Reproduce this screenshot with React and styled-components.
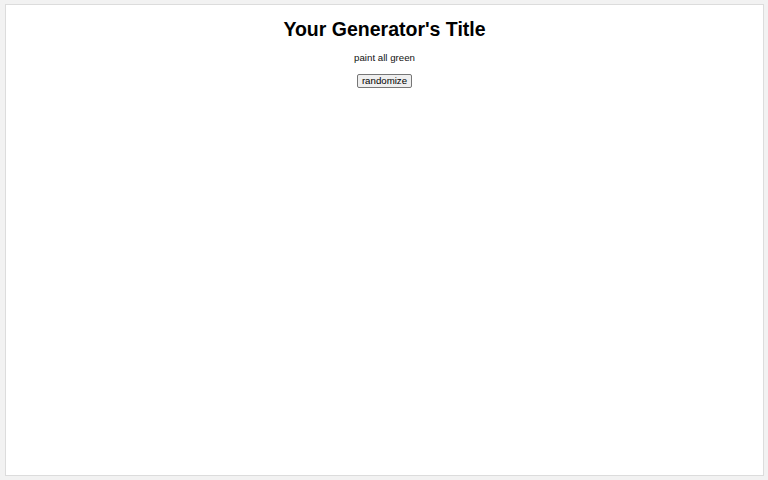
import React from "react";
import styled, { createGlobalStyle } from "styled-components";

const Global = createGlobalStyle`
  html, body {
    margin: 0;
    height: 100%;
    background: #f2f2f2;
    font-family: "Liberation Sans", Arial, sans-serif;
  }
  #root {
    height: 100%;
  }
`;

const Page = styled.div`
  height: 100%;
  box-sizing: border-box;
  padding: 4px 4px 4px 5px;
`;

const Panel = styled.div`
  height: 100%;
  box-sizing: border-box;
  background: #ffffff;
  border: 1px solid #dcdcdc;
  display: flex;
  flex-direction: column;
  align-items: center;
`;

const Title = styled.h1`
  margin: 12px 0 0;
  font-size: 19.5px;
  font-weight: bold;
  color: #000;
  line-height: 24px;
`;

const Caption = styled.p`
  margin: 11px 0 0;
  font-size: 9.7px;
  line-height: 12px;
  color: #111;
`;

const Button = styled.button`
  margin-top: 10px;
  font-family: "Liberation Sans", Arial, sans-serif;
  font-size: 9.7px;
  line-height: 10px;
  padding: 1px 4px;
  background: #efefef;
  border: 1px solid #767676;
  border-radius: 2px;
  color: #000;
`;

const App = () => {
  return (
    <>
      <Global />
      <Page>
        <Panel>
          <Title>Your Generator's Title</Title>
          <Caption>paint all green</Caption>
          <Button>randomize</Button>
        </Panel>
      </Page>
    </>
  );
};

export default App;
